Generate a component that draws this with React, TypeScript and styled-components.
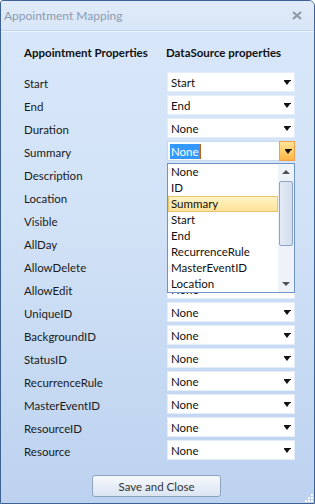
import React from "react";
import styled, { createGlobalStyle } from "styled-components";

const GlobalStyle = createGlobalStyle`
  body {
    margin: 0;
    font-family: Lato, "Liberation Sans", sans-serif;
  }
`;

const Window = styled.div`
  position: relative;
  width: 315px;
  height: 504px;
  box-sizing: border-box;
  border: 1px solid #3d6394;
  border-top-right-radius: 6px;
  border-top-left-radius: 3px;
  background: linear-gradient(#d8e7f9, #d3e3f7 40%, #bcd2ef);
  overflow: hidden;
  display: flex;
  flex-direction: column;
`;

const TitleBar = styled.div`
  height: 29px;
  flex: none;
  display: flex;
  align-items: center;
  justify-content: space-between;
  padding: 0 12px 0 3px;
  background: linear-gradient(#e0ebf9, #d9e6f7);
  border-bottom: 1px solid #c3d6ee;
  box-shadow: 0 1px 0 #eef4fc;
`;

const Title = styled.span`
  font-size: 12px;
  color: #8b9bb0;
`;

const Content = styled.div`
  flex: 1;
  padding: 15px 0 0 23px;
  display: flex;
  flex-direction: column;
`;

const HeaderRow = styled.div`
  display: grid;
  grid-template-columns: 142px 128px;
  height: 14px;
  margin-bottom: 12px;
`;

const Header = styled.div`
  font-size: 11.5px;
  font-weight: 700;
  color: #111;
  line-height: 14px;
  white-space: nowrap;
`;

const Grid = styled.div`
  display: grid;
  grid-template-columns: 143px 128px;
  grid-auto-rows: 20px;
  row-gap: 3px;
  align-items: center;
`;

const Label = styled.div`
  font-size: 11.5px;
  color: #1a1a1a;
  padding-top: 2px;
`;

const Combo = styled.div<{ $open?: boolean }>`
  position: relative;
  height: 20px;
  box-sizing: border-box;
  background: #fff;
  border: 1px solid ${(p) => (p.$open ? "#c9d9ee" : "#e4edf9")};
  display: flex;
  align-items: center;
  font-size: 11.5px;
  color: #111;
  padding-left: 3px;
`;

const Arrow = styled.span`
  position: absolute;
  right: 4px;
  top: 8px;
  width: 0;
  height: 0;
  border-left: 3.5px solid transparent;
  border-right: 3.5px solid transparent;
  border-top: 4px solid #111;
  &::before {
    content: "";
    position: absolute;
    left: -3.5px;
    top: -5px;
    width: 7px;
    height: 1px;
    background: #111;
  }
`;

const OrangeButton = styled.div`
  position: absolute;
  right: -1px;
  top: -1px;
  width: 16px;
  height: 20px;
  box-sizing: border-box;
  border: 1px solid #f0a04a;
  background: linear-gradient(#ffe69a, #ffcf6a 50%, #ffb547);
  & > span {
    right: 3px;
    top: 8px;
  }
`;

const Selected = styled.span`
  background: #3399ff;
  color: #fff;
  padding: 0 1px;
  margin-left: -1px;
  line-height: 15px;
  border-right: 1px solid #c0601a;
`;

const List = styled.div`
  position: absolute;
  left: -1px;
  top: 21px;
  width: 128px;
  height: 130px;
  box-sizing: border-box;
  border: 1px solid #6f92c7;
  background: #fff;
  z-index: 2;
  display: flex;
`;

const Items = styled.div`
  flex: 1;
`;

const Item = styled.div<{ $hot?: boolean }>`
  height: 16px;
  line-height: 16px;
  font-size: 11.5px;
  padding-left: 3px;
  color: #111;
  box-sizing: border-box;
  ${(p) =>
    p.$hot &&
    `
    background: linear-gradient(#fff3c4, #fde39a);
    border: 1px solid #e8c56d;
    line-height: 14px;
    padding-left: 2px;
  `}
`;

const Scroll = styled.div`
  width: 16px;
  background: #eef3fa;
  display: flex;
  flex-direction: column;
  align-items: center;
`;

const ScrollArrow = styled.span<{ $up?: boolean }>`
  width: 0;
  height: 0;
  margin: 6px 0;
  border-left: 4px solid transparent;
  border-right: 4px solid transparent;
  ${(p) =>
    p.$up
      ? "border-bottom: 4px solid #555;"
      : "border-top: 4px solid #555;"}
`;

const Thumb = styled.div`
  width: 14px;
  height: 65px;
  box-sizing: border-box;
  border: 1px solid #8ea4c6;
  border-radius: 2px;
  background: linear-gradient(90deg, #e4ebf6, #d3deee);
  margin-top: 1px;
  flex: none;
`;

const Spacer = styled.div`
  flex: 1;
`;

const Footer = styled.div`
  display: flex;
  justify-content: center;
  padding-top: 15px;
  margin-left: -23px;
`;

const Button = styled.div`
  width: 129px;
  height: 22px;
  box-sizing: border-box;
  border: 1px solid #8ea3c0;
  border-radius: 3px;
  background: linear-gradient(#f7f9fd, #e8eef8 50%, #dbe5f3);
  font-size: 11.5px;
  color: #333;
  display: flex;
  align-items: center;
  justify-content: center;
  margin-left: -2px;
`;

const Grip = styled.svg`
  position: absolute;
  right: 1px;
  bottom: 1px;
`;

const props = [
  "Start",
  "End",
  "Duration",
  "Summary",
  "Description",
  "Location",
  "Visible",
  "AllDay",
  "AllowDelete",
  "AllowEdit",
  "UniqueID",
  "BackgroundID",
  "StatusID",
  "RecurrenceRule",
  "MasterEventID",
  "ResourceID",
  "Resource",
];

const values: Record<string, string> = { Start: "Start", End: "End" };

const options = [
  "None",
  "ID",
  "Summary",
  "Start",
  "End",
  "RecurrenceRule",
  "MasterEventID",
  "Location",
];

function CloseIcon() {
  return (
    <svg width="10" height="9" viewBox="0 0 10 9">
      <path d="M1 1 L9 8 M9 1 L1 8" stroke="#8d98a6" strokeWidth="2.2" />
    </svg>
  );
}

export default function App() {
  return (
    <>
      <GlobalStyle />
      <Window>
        <TitleBar>
          <Title>Appointment Mapping</Title>
          <CloseIcon />
        </TitleBar>
        <Content>
          <HeaderRow>
            <Header>Appointment Properties</Header>
            <Header>DataSource properties</Header>
          </HeaderRow>
          <Grid>
            {props.map((p) => (
              <React.Fragment key={p}>
                <Label>{p}</Label>
                {p === "Summary" ? (
                  <Combo $open>
                    <Selected>None</Selected>
                    <OrangeButton>
                      <Arrow />
                    </OrangeButton>
                    <List>
                      <Items>
                        {options.map((o) => (
                          <Item key={o} $hot={o === "Summary"}>
                            {o}
                          </Item>
                        ))}
                      </Items>
                      <Scroll>
                        <ScrollArrow $up />
                        <Thumb />
                        <Spacer />
                        <ScrollArrow />
                      </Scroll>
                    </List>
                  </Combo>
                ) : (
                  <Combo>
                    {values[p] || "None"}
                    <Arrow />
                  </Combo>
                )}
              </React.Fragment>
            ))}
          </Grid>
          <Footer>
            <Button>Save and Close</Button>
          </Footer>
        </Content>
        <Grip width="10" height="10" viewBox="0 0 10 10">
          {[
            [8, 2],
            [8, 5],
            [5, 5],
            [8, 8],
            [5, 8],
            [2, 8],
          ].map(([x, y]) => (
            <rect key={`${x}-${y}`} x={x} y={y} width="2" height="2" fill="#fff" />
          ))}
        </Grip>
      </Window>
    </>
  );
}
